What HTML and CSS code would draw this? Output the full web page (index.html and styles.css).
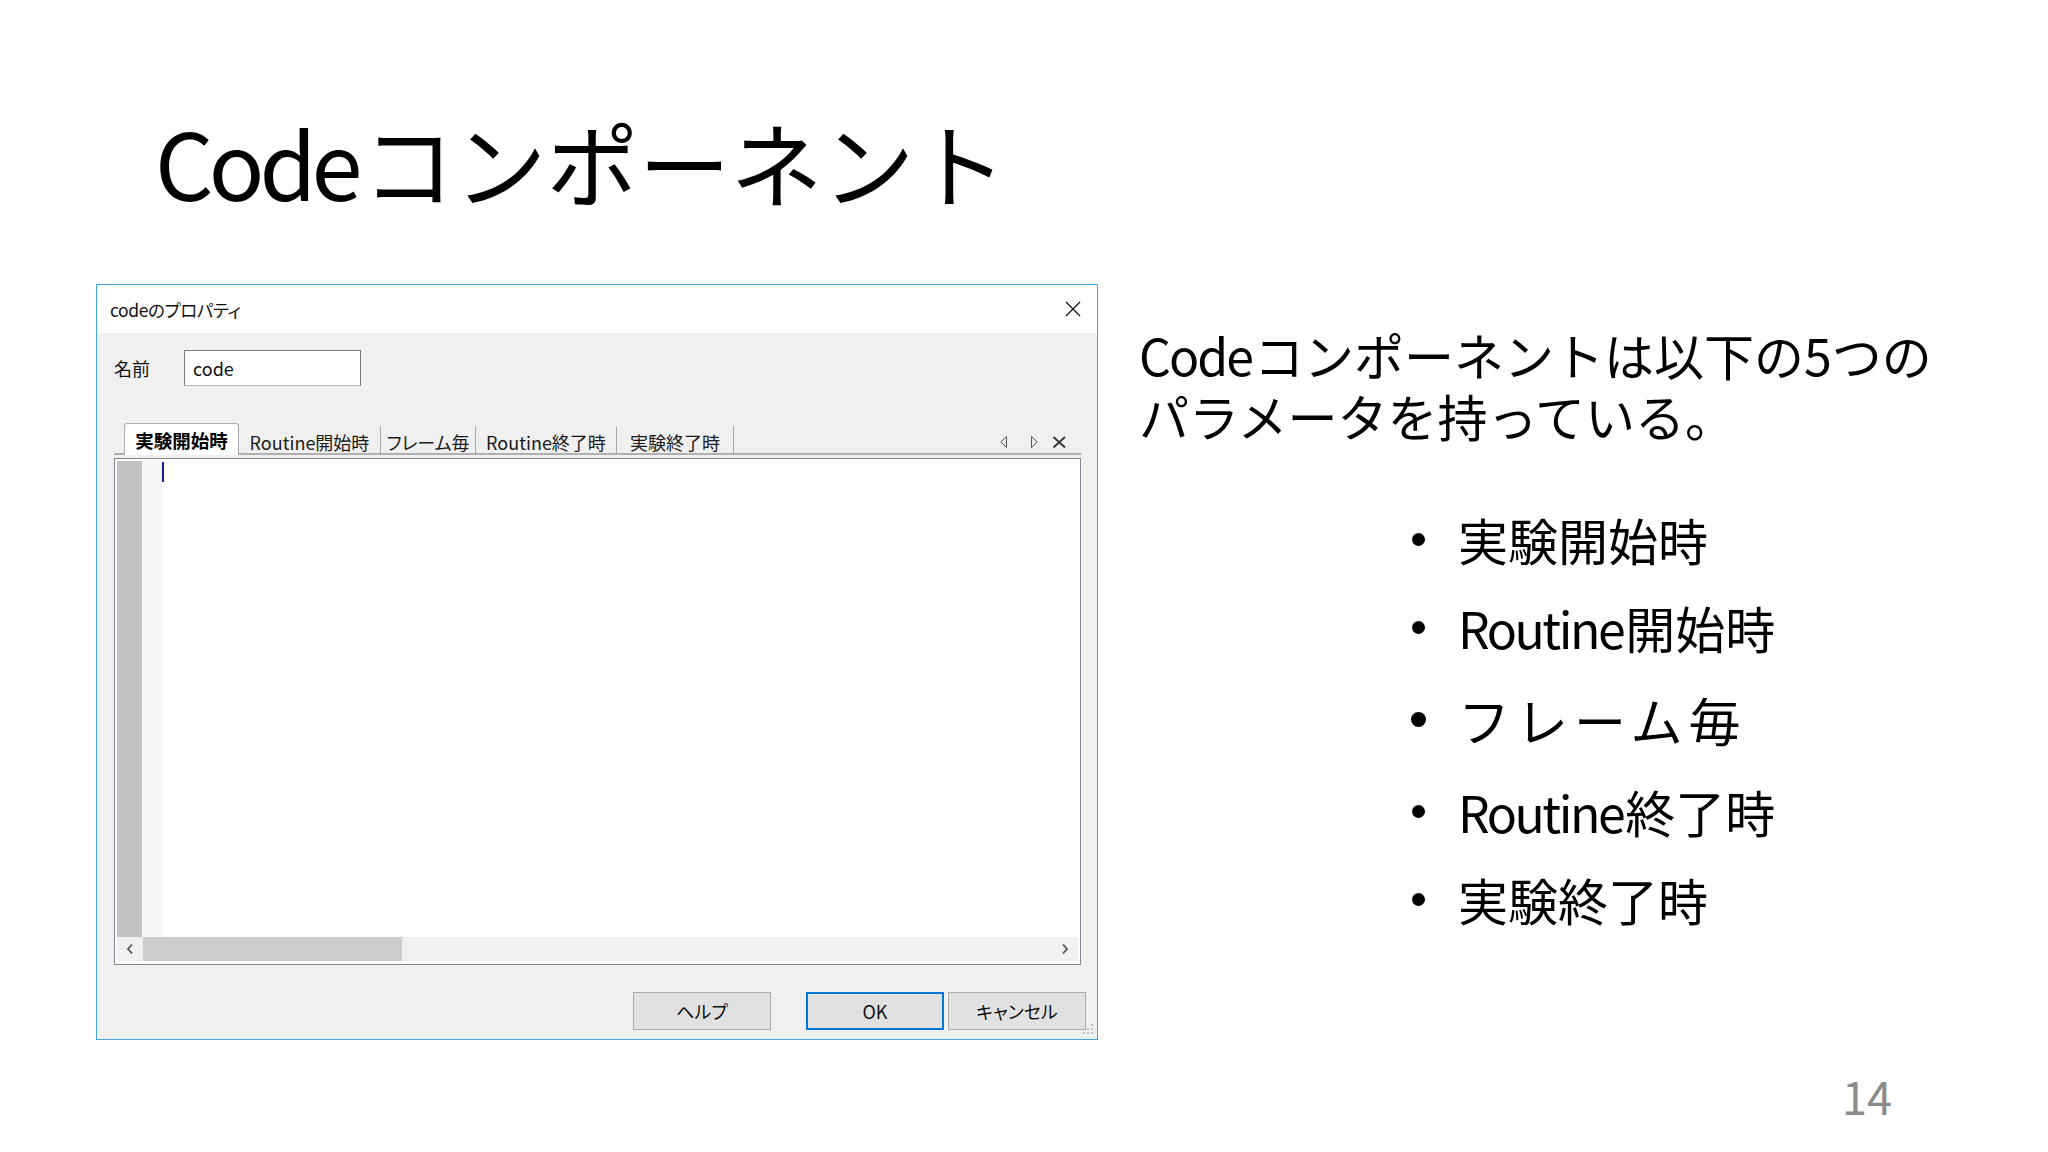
FILE: index.html
```html
<!DOCTYPE html>
<html lang="ja">
<head>
<meta charset="utf-8">
<title>Codeコンポーネント</title>
<link rel="stylesheet" href="styles.css">
</head>
<body>
<div class="slide">
  <h1 class="title"><span class="lat">Code</span>コンポーネント</h1>
  <div class="content">
    <div class="dialog">
      <div class="titlebar">
        <span class="dlg-title">codeのプロパティ</span>
        <svg class="close" width="16" height="16" viewBox="0 0 16 16"><path d="M1 1 L15 15 M15 1 L1 15" stroke="#111" stroke-width="1.3" fill="none"/></svg>
      </div>
      <div class="dlg-body">
        <div class="name-row">
          <span class="name-label">名前</span>
          <div class="name-input">code</div>
        </div>
        <div class="tabstrip">
          <div class="tab active" style="width:115px">実験開始時</div>
          <div class="tab" style="width:142px">Routine開始時</div>
          <div class="tab" style="width:95px">フレーム毎</div>
          <div class="tab" style="width:141px">Routine終了時</div>
          <div class="tab" style="width:117px">実験終了時</div>
          <svg class="tab-ctrl" width="66" height="14" viewBox="0 0 66 14">
            <path d="M6.5 1.5 L0.8 7 L6.5 12.5 Z" stroke="#555" stroke-width="1" fill="none"/>
            <path d="M31.5 1.5 L37.2 7 L31.5 12.5 Z" stroke="#555" stroke-width="1" fill="none"/>
            <path d="M53.5 2 L65 12.5 M65 2 L53.5 12.5" stroke="#333" stroke-width="1.8" fill="none"/>
          </svg>
        </div>
        <div class="editor">
          <div class="edit-area">
            <div class="gutter"></div>
            <div class="fold"></div>
            <div class="text-area"><span class="caret"></span></div>
          </div>
          <div class="hscroll">
            <div class="sbtn"><svg width="8" height="12" viewBox="0 0 8 12"><path d="M6 1.5 L2 6 L6 10.5" stroke="#555" stroke-width="1.8" fill="none"/></svg></div>
            <div class="thumb"></div>
            <div class="track"></div>
            <div class="sbtn"><svg width="8" height="12" viewBox="0 0 8 12"><path d="M2 1.5 L6 6 L2 10.5" stroke="#555" stroke-width="1.8" fill="none"/></svg></div>
          </div>
        </div>
        <div class="buttons">
          <div class="btn">ヘルプ</div>
          <div class="btn btn-ok">OK</div>
          <div class="btn btn-cancel">キャンセル</div>
        </div>
      </div>
      <svg class="grip" width="12" height="14" viewBox="0 0 12 14">
        <rect x="9" y="1" width="2" height="2" fill="#c4c4c4"/>
        <rect x="9" y="5" width="2" height="2" fill="#c4c4c4"/>
        <rect x="9" y="9" width="2" height="2" fill="#c4c4c4"/>
        <rect x="5" y="9" width="2" height="2" fill="#c4c4c4"/>
        <rect x="1" y="9" width="2" height="2" fill="#c4c4c4"/>
        <rect x="5" y="5" width="2" height="2" fill="#c4c4c4"/>
      </svg>
    </div>
    <div class="desc">
      <p class="lead"><span class="line"><span class="lat">Code</span>コンポーネントは以下の5つの</span><span class="line">パラメータを持っている。</span></p>
      <ul class="params">
        <li>実験開始時</li>
        <li><span class="lat">Routine</span>開始時</li>
        <li class="wide">フレーム毎</li>
        <li><span class="lat">Routine</span>終了時</li>
        <li>実験終了時</li>
      </ul>
    </div>
  </div>
  <div class="footer"><span class="pagenum">14</span></div>
</div>
</body>
</html>
```

FILE: styles.css
```css
html, body {
  margin: 0;
  padding: 0;
  background: #ffffff;
}

body {
  font-family: "Noto Sans CJK JP", "Noto Sans", sans-serif;
  color: #000;
}

.slide {
  width: 2048px;
  height: 1152px;
  display: flex;
  flex-direction: column;
  overflow: hidden;
  background: #fff;
}

.title {
  margin: 106px 0 0 155px;
  font-size: 92px;
  line-height: 110px;
  font-weight: 400;
  white-space: nowrap;
}

.title .lat {
  letter-spacing: -5px;
  margin-right: 5px;
}

.content {
  display: flex;
  align-items: flex-start;
  margin-top: 68px;
  padding-left: 96px;
}

/* ---------- dialog ---------- */
.dialog {
  position: relative;
  box-sizing: border-box;
  width: 1002px;
  height: 756px;
  border: 1px solid #41a5de;
  background: #f0f0f0;
  display: flex;
  flex-direction: column;
  font-size: 18px;
  font-feature-settings: "palt";
  flex-shrink: 0;
}

.titlebar {
  height: 48px;
  background: #fff;
  display: flex;
  align-items: center;
  justify-content: space-between;
  padding: 0 16px 0 13px;
}

.dlg-title {
  font-size: 17.5px;
  letter-spacing: -0.4px;
  color: #111;
}

.close {
  display: block;
}

.dlg-body {
  flex: 1;
  display: flex;
  flex-direction: column;
  padding: 17px 11px 9px 17px;
}

.name-row {
  display: flex;
  align-items: center;
  height: 36px;
}

.name-label {
  width: 70px;
  color: #111;
}

.name-input {
  box-sizing: border-box;
  width: 177px;
  height: 36px;
  border: 1px solid #7a7a7a;
  border-bottom-color: #b5b5b5;
  background: #fff;
  padding-left: 8px;
  display: flex;
  align-items: center;
  color: #111;
}

.tabstrip {
  margin-top: 39px;
  margin-right: 5px;
  height: 28px;
  border-bottom: 2px solid #b0b0b0;
  display: flex;
  align-items: flex-end;
  padding-left: 10px;
}

.tab {
  box-sizing: border-box;
  height: 27px;
  padding-top: 6px;
  line-height: 21px;
  text-align: center;
  border-right: 1px solid #a8a8a8;
  white-space: nowrap;
  color: #1a1a1a;
  font-size: 18px;
}

.tab.active {
  height: 32px;
  margin-bottom: -2px;
  background: #fff;
  border: 1px solid #acacac;
  border-bottom: none;
  border-radius: 3px 3px 0 0;
  font-weight: 700;
  font-size: 18.5px;
  color: #000;
  position: relative;
  z-index: 1;
}

.tab-ctrl {
  margin-left: auto;
  margin-right: 15px;
  align-self: flex-start;
  margin-top: 10px;
}

.editor {
  box-sizing: border-box;
  height: 507px;
  margin: 3px 5px 0 0;
  border: 1px solid #828790;
  background: #fff;
  padding: 2px 2px 3px 2px;
  display: flex;
  flex-direction: column;
}

.edit-area {
  flex: 1;
  display: flex;
}

.gutter {
  width: 25px;
  background: #c2c2c2;
}

.fold {
  width: 20px;
  background: repeating-conic-gradient(#ececec 0 25%, #ffffff 0 50%) 0 0 / 2px 2px;
}

.text-area {
  flex: 1;
  background: #fff;
}

.caret {
  display: block;
  width: 2px;
  height: 20px;
  margin-top: 1px;
  background: #1a1aa0;
}

.hscroll {
  height: 24px;
  display: flex;
  background: #f0f0f0;
}

.sbtn {
  width: 26px;
  display: flex;
  align-items: center;
  justify-content: center;
}

.thumb {
  width: 259px;
  background: #cdcdcd;
}

.track {
  flex: 1;
}

.buttons {
  margin-top: 27px;
  display: flex;
  justify-content: flex-end;
}

.btn {
  box-sizing: border-box;
  width: 138px;
  height: 38px;
  border: 1px solid #adadad;
  background: #e1e1e1;
  display: flex;
  align-items: center;
  justify-content: center;
  font-size: 18px;
  color: #111;
}

.btn-ok {
  margin-left: 35px;
  border: 2px solid #0078d7;
}

.btn-cancel {
  margin-left: 4px;
}

.grip {
  position: absolute;
  right: 3px;
  bottom: 2px;
}

/* ---------- description ---------- */
.desc {
  margin-left: 41px;
  padding-top: 40px;
}

.lead {
  margin: 0;
  font-size: 50px;
  white-space: nowrap;
}

.lead .line {
  display: block;
  height: 61px;
  line-height: 61px;
}

.lead .lat {
  letter-spacing: -2px;
  margin-right: 2px;
}

.params {
  list-style: none;
  margin: 49px 0 0;
  padding: 0 0 0 273px;
  font-size: 50px;
}

.params li {
  display: flex;
  align-items: center;
  height: 88px;
  white-space: nowrap;
}

.params li .lat {
  letter-spacing: -2.5px;
  margin-right: 2px;
}

.params li::before {
  content: "";
  width: 13px;
  height: 13px;
  border-radius: 50%;
  background: #000;
  margin-right: 33px;
  flex-shrink: 0;
}

.params li.wide {
  height: 96px;
  font-size: 52px;
  letter-spacing: 6px;
}

.params li.wide::before {
  width: 15px;
  height: 15px;
  margin-left: -1px;
  margin-right: 32px;
}

/* ---------- footer ---------- */
.footer {
  margin-top: auto;
  display: flex;
  justify-content: flex-end;
  padding: 0 156px 26px 0;
}

.pagenum {
  font-size: 45px;
  line-height: 60px;
  color: #8b8b8b;
}
```
